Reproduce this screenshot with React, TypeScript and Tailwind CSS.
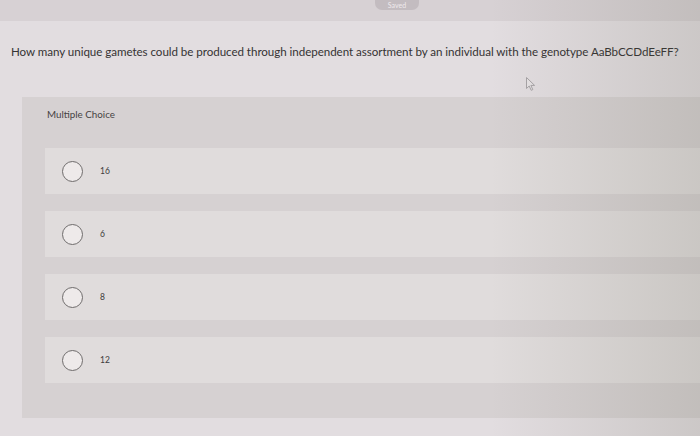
const options = ['16', '6', '8', '12'];

function Radio() {
  return (
    <span className="block w-[21px] h-[21px] rounded-full border-[1.5px] border-[#6f6c6c] bg-[#eeeaea] shrink-0" />
  );
}

function Cursor() {
  return (
    <svg width="12" height="16" viewBox="0 0 12 16" className="block">
      <path
        d="M1.5 1.5 L1.5 12.5 L4.2 10 L6.2 14.3 L7.8 13.6 L5.9 9.4 L9.6 9.4 Z"
        fill="#e6e2e4"
        stroke="#a7a3a6"
        strokeWidth="1"
        strokeLinejoin="round"
      />
    </svg>
  );
}

export default function App() {
  return (
    <div
      className="relative w-[700px] h-[436px] overflow-hidden bg-[#e2dde0] text-[#3a3838]"
      style={{ fontFamily: 'Lato, "Open Sans", sans-serif' }}
    >
      {/* top bar with save status */}
      <div className="h-[21px] bg-[#d7d1d4] flex justify-center">
        <div className="ml-[94px] h-[10px] w-[44px] rounded-b-[7px] bg-[#c3bcc0] flex items-end justify-center pb-[1px]">
          <span className="text-[7px] leading-none text-[#efeaed]">Saved</span>
        </div>
      </div>

      <div className="pl-[11px] pt-[24px]">
        <p className="text-[11.6px] leading-[14px] tracking-[-0.05px] text-[#353333] whitespace-nowrap">
          How many unique gametes could be produced through independent assortment by an individual with the genotype AaBbCCDdEeFF?
        </p>
      </div>

      <div className="flex justify-end pr-[163px] pt-[17px] h-[37px]">
        <Cursor />
      </div>

      <section className="ml-[22px] mt-[1px] h-[321px] bg-[#d6d1d2] pt-[11px]">
        <h2 className="pl-[25px] text-[9.8px] leading-[12px] text-[#464343]">Multiple Choice</h2>
        <div className="mt-[28px] pl-[23px] flex flex-col gap-[17px]">
          {options.map((o) => (
            <div key={o} className="h-[46px] bg-[#e0dcdc] flex items-center pl-[17px]">
              <Radio />
              <span className="ml-[17px] text-[8.5px] text-[#3d3b3b]">{o}</span>
            </div>
          ))}
        </div>
      </section>

      {/* screen falloff toward the right */}
      <div className="pointer-events-none absolute inset-0 bg-gradient-to-r from-transparent from-70% to-[rgba(90,90,70,0.16)]" />
    </div>
  );
}
